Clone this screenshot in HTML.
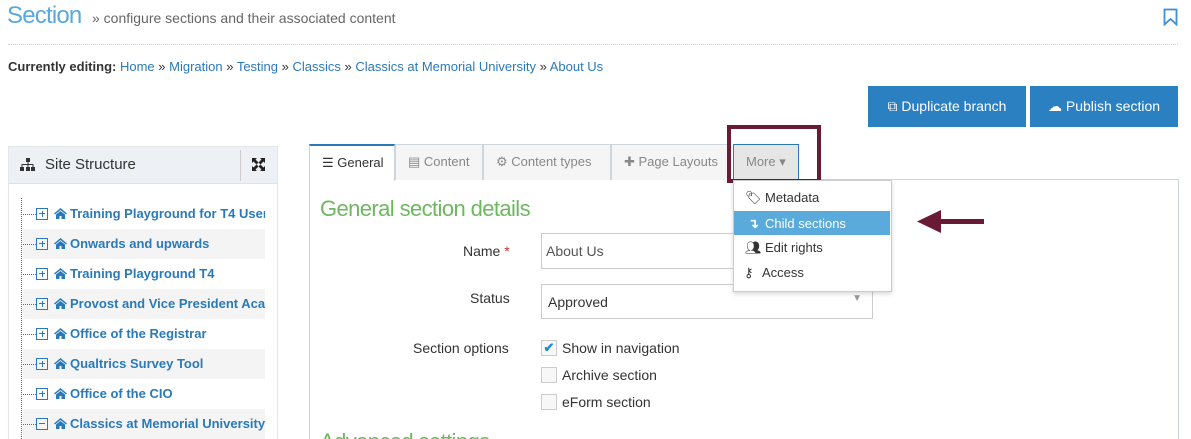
<!DOCTYPE html>
<html><head><meta charset="utf-8"><style>
*{box-sizing:border-box;margin:0;padding:0}
html,body{width:1191px;height:439px;overflow:hidden}
body{background:#fff;font-family:"Liberation Sans",Arial,sans-serif;color:#333;position:relative;font-size:13px}
.a{position:absolute;white-space:nowrap}
.link{color:#2a7ab9}
.btn{position:absolute;background:#2b80c2;color:#fff;font-size:14px;text-align:center;line-height:41px;height:41px}
.row{position:absolute;left:23px;width:242px;height:30px;line-height:30px;font-weight:bold;color:#2a7ab9;font-size:13px;padding-left:47px;overflow:hidden;white-space:nowrap}
.row.g{background:#f4f4f4}
.row .pl{position:absolute;left:13px;top:9px;width:12px;height:12px;border:1px solid #2a7ab9}
.row .pl:before{content:"";position:absolute;left:2px;top:4px;width:6px;height:1px;background:#2a7ab9}
.row .pl.p:after{content:"";position:absolute;left:4.5px;top:2px;width:1px;height:6px;background:#2a7ab9}
.row .dl{position:absolute;left:0;top:15px;width:13px;border-top:1px dotted #2a7ab9}
.row svg{position:absolute;left:31px;top:9px}
.tab{position:absolute;top:144px;height:36px;border:1px solid #cdd5dd;border-bottom:none;background:#f5f5f5;color:#888;font-size:13px;line-height:34px;padding-left:12px}
.mi{position:absolute;left:734px;width:156px;height:25px;line-height:25px;font-size:13px;padding-left:31px}
.cb{position:absolute;left:541px;width:16px;height:16px;border:1px solid #ccc;background:#f7f7f7}
</style></head><body>
<div class="a" style="left:7px;top:2px;font-size:24px;color:#5aa8dd;letter-spacing:-0.8px">Section</div>
<div class="a" style="left:92px;top:10px;font-size:14px;color:#666">» configure sections and their associated content</div>
<svg class="a" style="left:1163px;top:8px" width="15" height="18" viewBox="0 0 15 18"><path d="M1.5 1.5h12v15l-6-5.5-6 5.5z" fill="none" stroke="#3d8fd0" stroke-width="1.8"/></svg>
<div class="a" style="left:8px;top:44px;width:1170px;border-top:1px dotted #ccc"></div>
<div class="a" style="left:8px;top:59px;font-size:13px"><b>Currently editing:</b> <span class="link">Home</span> » <span class="link">Migration</span> » <span class="link">Testing</span> » <span class="link">Classics</span> » <span class="link">Classics at Memorial University</span> » <span class="link">About Us</span></div>
<div class="btn" style="left:868px;top:86px;width:158px">⧉ Duplicate branch</div>
<div class="btn" style="left:1030px;top:86px;width:148px">☁ Publish section</div>

<div class="a" style="left:8px;top:146px;width:270px;height:293px;border:1px solid #e3e6ea;border-bottom:none"></div>
<div class="a" style="left:9px;top:147px;width:268px;height:37px;background:#edf1f6;border-bottom:1px solid #dde2e8"></div>
<svg class="a" style="left:20px;top:158px" width="15" height="13" viewBox="0 0 15 13"><rect x="6" y="0" width="4" height="4" fill="#333"/><rect x="0" y="9" width="4" height="4" fill="#333"/><rect x="6" y="9" width="4" height="4" fill="#333"/><rect x="11" y="9" width="4" height="4" fill="#333"/><path d="M8 4v5M2 9V6.5h11V9" stroke="#333" fill="none"/></svg>
<div class="a" style="left:45px;top:156px;font-size:15px;color:#333">Site Structure</div>
<div class="a" style="left:240px;top:150px;height:31px;border-left:1px solid #ccc"></div>
<svg class="a" style="left:252px;top:158px" width="13" height="13" viewBox="0 0 13 13"><path d="M0 0h5L3.5 1.5 6.5 4.5 4.5 6.5 1.5 3.5 0 5zM13 0v5L11.5 3.5 8.5 6.5 6.5 4.5 9.5 1.5 8 0zM0 13V8l1.5 1.5 3-3 2 2-3 3L5 13zM13 13H8l1.5-1.5-3-3 2-2 3 3L13 8z" fill="#222"/></svg>
<div class="a" style="left:21px;top:198px;height:241px;border-left:1px dotted #2a7ab9"></div>
<div class="row" style="top:199px"><span class="dl"></span><span class="pl p"></span><svg width="13" height="11" viewBox="0 0 13 11"><path d="M6.5 0L0 5.5l1 1 5.5-4.5 5.5 4.5 1-1zM2 6.5v4.5h3.5V8h2v3H11V6.5L6.5 3z" fill="#2a7ab9"/></svg>Training Playground for T4 Users</div>
<div class="row g" style="top:229px"><span class="dl"></span><span class="pl p"></span><svg width="13" height="11" viewBox="0 0 13 11"><path d="M6.5 0L0 5.5l1 1 5.5-4.5 5.5 4.5 1-1zM2 6.5v4.5h3.5V8h2v3H11V6.5L6.5 3z" fill="#2a7ab9"/></svg>Onwards and upwards</div>
<div class="row" style="top:259px"><span class="dl"></span><span class="pl p"></span><svg width="13" height="11" viewBox="0 0 13 11"><path d="M6.5 0L0 5.5l1 1 5.5-4.5 5.5 4.5 1-1zM2 6.5v4.5h3.5V8h2v3H11V6.5L6.5 3z" fill="#2a7ab9"/></svg>Training Playground T4</div>
<div class="row g" style="top:289px"><span class="dl"></span><span class="pl p"></span><svg width="13" height="11" viewBox="0 0 13 11"><path d="M6.5 0L0 5.5l1 1 5.5-4.5 5.5 4.5 1-1zM2 6.5v4.5h3.5V8h2v3H11V6.5L6.5 3z" fill="#2a7ab9"/></svg>Provost and Vice President Academic</div>
<div class="row" style="top:319px"><span class="dl"></span><span class="pl p"></span><svg width="13" height="11" viewBox="0 0 13 11"><path d="M6.5 0L0 5.5l1 1 5.5-4.5 5.5 4.5 1-1zM2 6.5v4.5h3.5V8h2v3H11V6.5L6.5 3z" fill="#2a7ab9"/></svg>Office of the Registrar</div>
<div class="row g" style="top:349px"><span class="dl"></span><span class="pl p"></span><svg width="13" height="11" viewBox="0 0 13 11"><path d="M6.5 0L0 5.5l1 1 5.5-4.5 5.5 4.5 1-1zM2 6.5v4.5h3.5V8h2v3H11V6.5L6.5 3z" fill="#2a7ab9"/></svg>Qualtrics Survey Tool</div>
<div class="row" style="top:379px"><span class="dl"></span><span class="pl p"></span><svg width="13" height="11" viewBox="0 0 13 11"><path d="M6.5 0L0 5.5l1 1 5.5-4.5 5.5 4.5 1-1zM2 6.5v4.5h3.5V8h2v3H11V6.5L6.5 3z" fill="#2a7ab9"/></svg>Office of the CIO</div>
<div class="row g" style="top:409px"><span class="dl"></span><span class="pl"></span><svg width="13" height="11" viewBox="0 0 13 11"><path d="M6.5 0L0 5.5l1 1 5.5-4.5 5.5 4.5 1-1zM2 6.5v4.5h3.5V8h2v3H11V6.5L6.5 3z" fill="#2a7ab9"/></svg>Classics at Memorial University</div>

<div class="a" style="left:309px;top:179px;width:870px;height:260px;border:1px solid #cdd5dd;border-bottom:none"></div>
<div class="tab" style="left:309px;width:86px;background:#fff;color:#333;border-top:2px solid #2a7ab9;height:37px">☰ General</div>
<div class="tab" style="left:395px;width:88px">▤ Content</div>
<div class="tab" style="left:483px;width:128px">⚙ Content types</div>
<div class="tab" style="left:611px;width:120px">✚ Page Layouts</div>
<div class="tab" style="left:733px;width:66px;background:#e6e6e6;border:1px solid #2a7ab9;border-bottom:none">More ▾</div>
<div class="a" style="left:727px;top:125px;width:94px;height:58px;border:4px solid #6b1a36"></div>

<div class="a" style="left:320px;top:196px;font-size:22px;color:#6db85f;letter-spacing:-0.6px">General section details</div>
<div class="a" style="left:463px;top:243px;font-size:14px">Name <span style="color:#c9302c">*</span></div>
<div class="a" style="left:541px;top:233px;width:331px;height:36px;border:1px solid #ccc;padding:9px 4px;font-size:14px;color:#555">About Us</div>
<div class="a" style="left:470px;top:290px;font-size:14px">Status</div>
<div class="a" style="left:541px;top:284px;width:332px;height:35px;border:1px solid #ccc;padding:9px 6px;font-size:14px;color:#333">Approved<span style="position:absolute;right:10px;top:8px;color:#999;font-size:10px">▼</span></div>
<div class="a" style="left:413px;top:340px;font-size:14px">Section options</div>
<div class="cb" style="top:340px;color:#1a8fd0;font-size:13px;line-height:14px;text-align:center;font-weight:bold">✔</div>
<div class="a" style="left:562px;top:340px;font-size:14px">Show in navigation</div>
<div class="cb" style="top:367px"></div>
<div class="a" style="left:562px;top:367px;font-size:14px">Archive section</div>
<div class="cb" style="top:394px"></div>
<div class="a" style="left:562px;top:394px;font-size:14px">eForm section</div>
<div class="a" style="left:320px;top:429px;height:10px;overflow:hidden;font-size:22px;line-height:25px;color:#6db85f;letter-spacing:-0.6px">Advanced settings</div>

<div class="a" style="left:733px;top:180px;width:159px;height:112px;background:#fff;border:1px solid #ccc;box-shadow:0 2px 4px rgba(0,0,0,.15)"></div>
<div class="mi" style="top:185px"><span style="position:absolute;left:11px">🏷︎</span>Metadata</div>
<div class="mi" style="top:211px;background:#5aabdc;color:#fff;height:24px"><span style="position:absolute;left:14px;font-weight:bold">↴</span>Child sections</div>
<div class="mi" style="top:235px"><span style="position:absolute;left:11px">👥︎</span>Edit rights</div>
<div class="mi" style="top:260px;padding-left:28px"><span style="position:absolute;left:10px">⚷</span>Access</div>

<svg class="a" style="left:915px;top:208px" width="72" height="28" viewBox="0 0 72 28"><path d="M2 13.5L26 2v9h43v5H26v9z" fill="#6b1a36"/></svg>
</body></html>
